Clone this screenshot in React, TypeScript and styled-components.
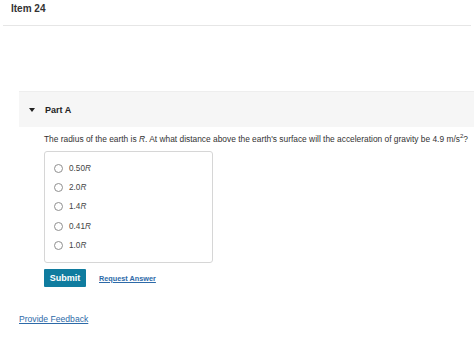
import { createGlobalStyle, styled } from "styled-components";

const GlobalStyle = createGlobalStyle`
  html, body {
    margin: 0;
    padding: 0;
    background: #fff;
  }
  body {
    font-family: "Liberation Sans", Arial, sans-serif;
    color: #333;
  }
`;

const Page = styled.div`
  width: 474px;
  height: 345px;
  overflow: hidden;
  display: flex;
  flex-direction: column;
`;

const ItemHeader = styled.div`
  height: 26px;
  box-sizing: border-box;
  margin: 0 3px;
  padding: 3px 0 0 8px;
  border-bottom: 1px solid #e6e6e6;
  font-size: 10px;
  font-weight: 700;
  color: #333;
`;

const Part = styled.div`
  margin: 65px 0 0 19px;
  display: flex;
  flex-direction: column;
`;

const PartHeader = styled.div`
  height: 36px;
  background-color: #f6f6f6;
  border-top: 1px solid #eeeeee;
  box-sizing: border-box;
  display: flex;
  flex-direction: row;
  align-items: center;
  padding-left: 10px;
  gap: 10px;
  font-size: 9px;
  font-weight: 700;
  color: #222;
`;

const Caret = styled.span`
  width: 0;
  height: 0;
  border-left: 3.5px solid transparent;
  border-right: 3.5px solid transparent;
  border-top: 4px solid #222;
`;

const Body = styled.div`
  padding: 7px 0 0 25px;
  display: flex;
  flex-direction: column;
  align-items: flex-start;
`;

const Question = styled.div`
  font-size: 8.4px;
  line-height: 11px;
  color: #333;
  white-space: nowrap;

  sup {
    font-size: 6px;
    line-height: 0;
  }
`;

const Choices = styled.div`
  margin-top: 6px;
  width: 169px;
  height: 112px;
  box-sizing: border-box;
  border: 1px solid #d6d6d6;
  border-radius: 3px;
  display: flex;
  flex-direction: column;
  padding: 11px 0 0 9px;
  gap: 9.4px;
`;

const Choice = styled.label`
  display: flex;
  flex-direction: row;
  align-items: center;
  gap: 6px;
  height: 10px;
  font-size: 8.2px;
  color: #444;
`;

const Radio = styled.span`
  width: 9px;
  height: 9px;
  box-sizing: border-box;
  border: 1px solid #8f8f8f;
  border-radius: 50%;
  background: #fff;
`;

const Actions = styled.div`
  margin-top: 6px;
  display: flex;
  flex-direction: row;
  align-items: center;
  gap: 13px;
`;

const SubmitButton = styled.button`
  width: 42px;
  height: 18px;
  border: none;
  border-radius: 1px;
  background-color: #0f7c9f;
  color: #fff;
  font-family: "Liberation Sans", Arial, sans-serif;
  font-size: 9px;
  font-weight: 700;
  padding: 0;
`;

const LinkText = styled.a<{ $bold?: boolean; $size: number }>`
  color: #2d6aa8;
  text-decoration: underline;
  font-size: ${(p) => p.$size}px;
  font-weight: ${(p) => (p.$bold ? 700 : 400)};
  cursor: pointer;
`;

const Feedback = styled.div`
  margin: 21px 0 0 19px;
`;

const options = ["0.50", "2.0", "1.4", "0.41", "1.0"];

const App = () => {
  return (
    <Page>
      <GlobalStyle />
      <ItemHeader>Item 24</ItemHeader>
      <Part>
        <PartHeader>
          <Caret />
          Part A
        </PartHeader>
        <Body>
          <Question>
            The radius of the earth is <i>R</i>. At what distance above the
            earth's surface will the acceleration of gravity be 4.9 m/s
            <sup>2</sup>?
          </Question>
          <Choices>
            {options.map((o) => (
              <Choice key={o}>
                <Radio />
                <span>
                  {o}
                  <i>R</i>
                </span>
              </Choice>
            ))}
          </Choices>
          <Actions>
            <SubmitButton>Submit</SubmitButton>
            <LinkText $bold $size={7.3}>
              Request Answer
            </LinkText>
          </Actions>
        </Body>
      </Part>
      <Feedback>
        <LinkText $size={8.6}>Provide Feedback</LinkText>
      </Feedback>
    </Page>
  );
};

export default App;
